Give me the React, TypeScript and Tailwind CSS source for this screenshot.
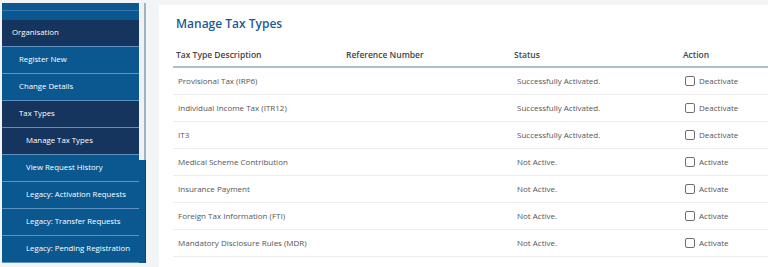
import React from "react";

const menu = [
  { label: "Organisation", indent: "pl-[10px]", dark: true },
  { label: "Register New", indent: "pl-[17px]", dark: false },
  { label: "Change Details", indent: "pl-[17px]", dark: false },
  { label: "Tax Types", indent: "pl-[17px]", dark: true },
  { label: "Manage Tax Types", indent: "pl-[24px]", dark: true },
  { label: "View Request History", indent: "pl-[24px]", dark: false },
  { label: "Legacy: Activation Requests", indent: "pl-[24px]", dark: false },
  { label: "Legacy: Transfer Requests", indent: "pl-[24px]", dark: false },
  { label: "Legacy: Pending Registration", indent: "pl-[24px]", dark: false },
];

const taxTypes = [
  { name: "Provisional Tax (IRP6)", status: "Successfully Activated.", action: "Deactivate" },
  { name: "Individual Income Tax (ITR12)", status: "Successfully Activated.", action: "Deactivate" },
  { name: "IT3", status: "Successfully Activated.", action: "Deactivate" },
  { name: "Medical Scheme Contribution", status: "Not Active.", action: "Activate" },
  { name: "Insurance Payment", status: "Not Active.", action: "Activate" },
  { name: "Foreign Tax Information (FTI)", status: "Not Active.", action: "Activate" },
  { name: "Mandatory Disclosure Rules (MDR)", status: "Not Active.", action: "Activate" },
];

function Sidebar() {
  return (
    <div className="flex pl-[2px] pt-[3px] h-[263px]">
      <nav className="w-[137px] bg-[#0b5891] flex flex-col">
        <div className="h-[8px] border-b border-[#3a77aa]" />
        <div className="h-[9px]" />
        {menu.map((item) => (
          <div
            key={item.label}
            className={`h-[27px] flex items-center border-b border-[#5f92bf] text-white text-[7.8px] ${item.indent} ${
              item.dark ? "bg-[#15355f]" : "bg-[#0b5891]"
            }`}
          >
            {item.label}
          </div>
        ))}
      </nav>
      {/* scrollbar */}
      <div className="w-[7px] flex flex-col bg-[#0b5891]">
        <div className="h-[157px] bg-[#eef2f5] border-l-[3px] border-[#eef2f5] border-r-[2px] border-r-[#9fb3c6]" />
        <div className="flex-1 border-r border-[#0a4673]" />
      </div>
    </div>
  );
}

function Checkbox() {
  return <span className="inline-block w-[10px] h-[10px] rounded-[2px] border border-[#6f6f6f] bg-white" />;
}

export default function App() {
  return (
    <div
      className="w-[768px] h-[267px] bg-[#f3f4f5] flex overflow-hidden"
      style={{ fontFamily: '"Open Sans", "Noto Sans", sans-serif' }}
    >
      <Sidebar />

      <main className="flex-1 bg-white mt-[5px] ml-[13px] pl-[14px] overflow-hidden">
        <h1 className="text-[12px] font-semibold text-[#1d5a92] mt-[10px] pl-[3px] leading-[18px]">
          Manage Tax Types
        </h1>

        <div className="mt-[11px] w-[800px]">
          {/* header */}
          <div className="grid grid-cols-[171px_168px_168px_1fr] h-[24px] items-center border-b-2 border-[#a9c0d8] text-[8.5px] font-semibold text-[#444]">
            <div className="pl-[3px]">Tax Type Description</div>
            <div className="pl-[2px]">Reference Number</div>
            <div className="pl-[2px]">Status</div>
            <div className="pl-[3px]">Action</div>
          </div>

          {taxTypes.map((t) => (
            <div
              key={t.name}
              className="grid grid-cols-[171px_168px_168px_1fr] h-[27px] items-center border-b border-[#ececec] text-[8px] text-[#555]"
            >
              <div className="pl-[5px]">{t.name}</div>
              <div />
              <div className="pl-[5px]">{t.status}</div>
              <div className="pl-[5px] flex items-center gap-[4px]">
                <Checkbox />
                <span>{t.action}</span>
              </div>
            </div>
          ))}
        </div>
      </main>
    </div>
  );
}
